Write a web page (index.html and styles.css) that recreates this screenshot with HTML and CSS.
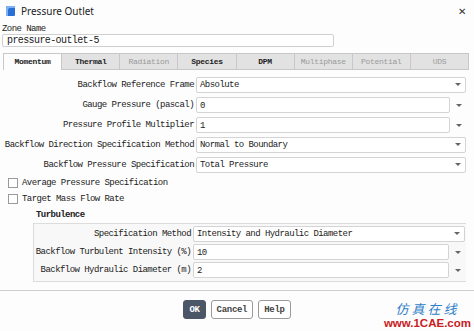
FILE: index.html
```html
<!DOCTYPE html>
<html lang="en">
<head>
    <meta charset="UTF-8">
    <meta name="viewport" content="width=device-width, initial-scale=1.0">
    <title>Pressure Outlet</title>
    <link rel="stylesheet" href="styles.css">
</head>
<body>
    <div class="dialog">
        <div class="titlebar">
            <span class="app-icon"></span>
            <span class="title">Pressure Outlet</span>
            <span class="close">&#x2715;</span>
        </div>

        <div class="zone">
            <div class="zone-label">Zone Name</div>
            <div class="zone-input">pressure-outlet-5</div>
        </div>

        <div class="tabs">
            <div class="tab active">Momentum</div>
            <div class="tab">Thermal</div>
            <div class="tab off">Radiation</div>
            <div class="tab">Species</div>
            <div class="tab">DPM</div>
            <div class="tab off">Multiphase</div>
            <div class="tab off">Potential</div>
            <div class="tab off">UDS</div>
        </div>

        <div class="panel">
            <div class="row">
                <label>Backflow Reference Frame</label>
                <div class="select">Absolute<span class="caret"></span></div>
            </div>
            <div class="row">
                <label>Gauge Pressure (pascal)</label>
                <div class="field"><div class="input">0</div><span class="caret"></span></div>
            </div>
            <div class="row">
                <label>Pressure Profile Multiplier</label>
                <div class="field"><div class="input">1</div><span class="caret"></span></div>
            </div>
            <div class="row">
                <label>Backflow Direction Specification Method</label>
                <div class="select">Normal to Boundary<span class="caret"></span></div>
            </div>
            <div class="row">
                <label>Backflow Pressure Specification</label>
                <div class="select">Total Pressure<span class="caret"></span></div>
            </div>

            <div class="check"><span class="box"></span>Average Pressure Specification</div>
            <div class="check"><span class="box"></span>Target Mass Flow Rate</div>

            <div class="group-title">Turbulence</div>
            <div class="group">
                <div class="row">
                    <label>Specification Method</label>
                    <div class="select">Intensity and Hydraulic Diameter<span class="caret"></span></div>
                </div>
                <div class="row">
                    <label>Backflow Turbulent Intensity (%)</label>
                    <div class="field"><div class="input">10</div><span class="caret"></span></div>
                </div>
                <div class="row">
                    <label>Backflow Hydraulic Diameter (m)</label>
                    <div class="field"><div class="input">2</div><span class="caret"></span></div>
                </div>
            </div>
        </div>

        <div class="footer">
            <button class="btn primary">OK</button>
            <button class="btn">Cancel</button>
            <button class="btn">Help</button>
        </div>

        <div class="stamp">
            <div class="stamp-cn">仿真在线</div>
            <div class="stamp-url">www.1CAE.com</div>
        </div>
    </div>
</body>
</html>
```

FILE: styles.css
```css
body {
    margin: 0;
    background-color: #fff;
    font-family: "Liberation Mono", "DejaVu Sans Mono", monospace;
    font-size: 9px;
    letter-spacing: -0.55px;
    color: #222;
}

.dialog {
    position: relative;
    width: 474px;
    height: 331px;
    overflow: hidden;
    background-color: #fdfdfd;
}

/* barra de titulo */
.titlebar {
    display: flex;
    align-items: center;
    height: 22px;
    padding-left: 6px;
    font-family: "Noto Sans", "Open Sans", sans-serif;
    letter-spacing: 0;
    font-size: 10px;
    color: #222;
}

.app-icon {
    width: 9px;
    height: 10px;
    margin-right: 6px;
    background-color: #2a6fd6;
    border-radius: 1px;
    box-shadow: inset 3px 3px 0 -1px #7fb2f0;
}

.title {
    flex: 1;
}

.close {
    width: 16px;
    font-size: 10px;
    color: #333;
}

.zone {
    padding: 2px 2px 0;
}

.zone-label {
    height: 10px;
    line-height: 10px;
}

.zone-input {
    width: 322px;
    height: 11px;
    line-height: 11px;
    padding: 0 4px;
    border: 1px solid #d0d0d0;
    border-radius: 2px;
    background-color: #fff;
    font-size: 10px;
    letter-spacing: -0.6px;
}

.tabs {
    display: flex;
    margin: 6px 5px 0 3px;
    height: 16px;
    border-bottom: 1px solid #c8c8c8;
}

.tab {
    flex: 1;
    text-align: center;
    line-height: 15px;
    font-weight: bold;
    font-size: 8px;
    letter-spacing: -0.3px;
    background-color: #e2e2e2;
    border: 1px solid #c8c8c8;
    border-bottom: none;
    border-left: none;
}

.tab:first-child {
    border-left: 1px solid #c8c8c8;
}

.tab.active {
    background-color: #fdfdfd;
    margin-bottom: -1px;
}

.tab.off {
    font-weight: normal;
    color: #9a9a9a;
}

.panel {
    padding: 5px 8px 0 3px;
    height: 215px;
    border-bottom: 1px solid #cfcfcf;
}

.row {
    display: grid;
    grid-template-columns: 191px 1fr;
    column-gap: 2px;
    align-items: center;
    height: 20px;
}

.row label {
    text-align: right;
    white-space: nowrap;
}

.select {
    position: relative;
    height: 14px;
    line-height: 14px;
    padding-left: 3px;
    border: 1px solid #d4d4d4;
    border-radius: 2px;
    background-color: #fff;
}

.select .caret {
    position: absolute;
    right: 4px;
    top: 5px;
}

.caret {
    width: 0;
    height: 0;
    border-left: 3px solid transparent;
    border-right: 3px solid transparent;
    border-top: 3px solid #666;
}

.field {
    display: flex;
    align-items: center;
}

.input {
    flex: 1;
    height: 14px;
    line-height: 16px;
    padding-left: 3px;
    border: 1px solid #d4d4d4;
    border-radius: 2px;
    background-color: #fff;
}

.field .caret {
    margin: 0 4px 0 6px;
}

.check {
    display: flex;
    align-items: center;
    height: 16px;
    padding-left: 5px;
}

.check:first-of-type {
    margin-top: 4px;
}

.box {
    width: 8px;
    height: 8px;
    margin-right: 4px;
    border: 1px solid #9a9a9a;
    background-color: #fff;
}

.group-title {
    padding-left: 33px;
    height: 16px;
    line-height: 16px;
    font-weight: bold;
}

.group {
    margin: 0 0 0 30px;
    padding: 1px 1px 2px 0;
    border: 1px solid #dcdcdc;
    border-right: none;
    background-color: #f8f8f8;
}

.group .row {
    grid-template-columns: 157px 1fr;
    height: 18px;
}

.footer {
    display: flex;
    justify-content: center;
    gap: 5px;
    padding-top: 9px;
}

.btn {
    height: 19px;
    padding: 0 5px;
    border: 1px solid #9a9a9a;
    border-radius: 3px;
    background-color: #fff;
    font-family: "Liberation Mono", monospace;
    font-size: 9px;
    letter-spacing: -0.3px;
    font-weight: bold;
    color: #444;
    cursor: pointer;
}

.btn.primary {
    background-color: #4b5766;
    border-color: #4b5766;
    color: #fff;
}

.stamp {
    position: absolute;
    right: 3px;
    bottom: 2px;
    display: flex;
    flex-direction: column;
    align-items: center;
    gap: 1px;
    letter-spacing: 0;
}

.stamp-cn {
    font-family: "Noto Sans CJK SC", sans-serif;
    font-size: 13px;
    font-style: italic;
    letter-spacing: 3px;
    color: #2f7fc8;
    line-height: 14px;
}

.stamp-url {
    font-family: "Liberation Sans", sans-serif;
    font-size: 11.5px;
    font-weight: bold;
    color: #c8201e;
    line-height: 12px;
}
```
